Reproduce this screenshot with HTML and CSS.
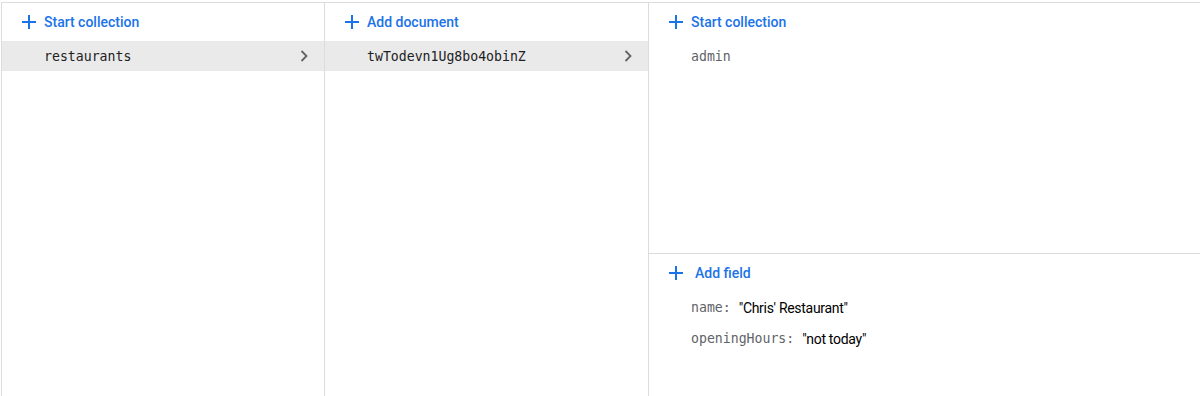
FILE: index.html
```html
<!DOCTYPE html>
<html lang="en">
<head>
    <meta charset="UTF-8">
    <meta name="viewport" content="width=device-width, initial-scale=1.0">
    <title>Cloud Firestore - Data</title>
    <link rel="stylesheet" href="styles.css">
</head>
<body>
    <div class="viewer">
        <!-- Root collections -->
        <div class="panel">
            <div class="panel-action">
                <svg class="plus" viewBox="0 0 14 14"><path d="M7 0v14M0 7h14"/></svg>
                <span>Start collection</span>
            </div>
            <div class="list-item selected">
                <span class="item-name">restaurants</span>
                <svg class="chevron" viewBox="0 0 8 12"><path d="M1.5 1l5 5-5 5"/></svg>
            </div>
        </div>

        <!-- Documents in restaurants -->
        <div class="panel">
            <div class="panel-action">
                <svg class="plus" viewBox="0 0 14 14"><path d="M7 0v14M0 7h14"/></svg>
                <span>Add document</span>
            </div>
            <div class="list-item selected">
                <span class="item-name">twTodevn1Ug8bo4obinZ</span>
                <svg class="chevron" viewBox="0 0 8 12"><path d="M1.5 1l5 5-5 5"/></svg>
            </div>
        </div>

        <!-- Document detail -->
        <div class="panel panel-doc">
            <div class="doc-collections">
                <div class="panel-action">
                    <svg class="plus" viewBox="0 0 14 14"><path d="M7 0v14M0 7h14"/></svg>
                    <span>Start collection</span>
                </div>
                <div class="list-item">
                    <span class="item-name muted">admin</span>
                </div>
            </div>
            <div class="doc-fields">
                <div class="panel-action wide">
                    <svg class="plus" viewBox="0 0 14 14"><path d="M7 0v14M0 7h14"/></svg>
                    <span>Add field</span>
                </div>
                <div class="field">
                    <span class="field-key">name:</span>
                    <span class="field-value">"Chris' Restaurant"</span>
                </div>
                <div class="field">
                    <span class="field-key">openingHours:</span>
                    <span class="field-value">"not today"</span>
                </div>
            </div>
        </div>
    </div>
</body>
</html>
```

FILE: styles.css
```css
/* Firestore data viewer, three columns */
html, body {
    height: 100%;
}

body {
    margin: 0;
    padding: 2px 0 0 1px;
    box-sizing: border-box;
    font-family: Roboto, Arial, sans-serif;
    color: #202124;
    background: white;
}

.viewer {
    display: grid;
    grid-template-columns: 323px 324px 1fr;
    height: 100%;
    border-top: 1px solid #dadce0;
    border-left: 1px solid #dadce0;
}

.panel {
    border-right: 1px solid #dadce0;
}

.panel-doc {
    border-right: none;
    display: flex;
    flex-direction: column;
}

.panel-action {
    display: flex;
    align-items: center;
    height: 38px;
    padding-left: 20px;
    font-size: 14px;
    font-weight: 500;
    color: #1a73e8;
}

.panel-action .plus {
    width: 14px;
    height: 14px;
    margin-right: 8px;
    stroke: #1a73e8;
    stroke-width: 2;
    fill: none;
}

.panel-action.wide .plus {
    margin-right: 12px;
}

.list-item {
    display: flex;
    align-items: center;
    justify-content: space-between;
    height: 30px;
    padding: 0 16px 0 42px;
}

.list-item.selected {
    background: #eaeaea;
}

.item-name {
    font-family: "DejaVu Sans Mono", monospace;
    font-size: 13.2px;
    color: #202124;
}

.item-name.muted {
    color: #5f6368;
}

.chevron {
    width: 8px;
    height: 12px;
    stroke: #5f6368;
    stroke-width: 1.8;
    fill: none;
}

.doc-collections {
    height: 250px;
    border-bottom: 1px solid #dadce0;
}

.field {
    display: flex;
    align-items: center;
    height: 31px;
    padding-left: 42px;
}

.field-key {
    font-family: "DejaVu Sans Mono", monospace;
    font-size: 13.2px;
    color: #5f6368;
    margin-right: 8px;
}

.field-value {
    font-family: Roboto, Arial, sans-serif;
    font-size: 14px;
    letter-spacing: -0.3px;
    color: #000;
}
```
